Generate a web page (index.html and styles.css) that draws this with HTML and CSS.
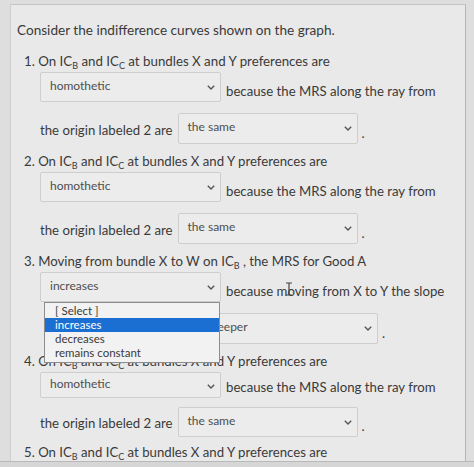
FILE: index.html
```html
<!DOCTYPE html>
<html>
<head>
<meta charset="utf-8">
<link rel="stylesheet" href="styles.css">
</head>
<body>
<div class="screen">
  <div class="panel">
    <p class="title">Consider the indifference curves shown on the graph.</p>

    <div class="item">
      <div class="head">1. On IC<sub>B</sub> and IC<sub>C</sub> at bundles X and Y preferences are</div>
      <div class="row first">
        <div class="sel wide"><span>homothetic</span><svg class="chev" viewBox="0 0 8 5"><path d="M0.8 0.8 L4 4 L7.2 0.8"/></svg></div>
        <span class="txt">because the MRS along the ray from</span>
      </div>
      <div class="row second">
        <span class="txt">the origin labeled 2 are</span>
        <div class="sel"><span>the same</span><svg class="chev" viewBox="0 0 8 5"><path d="M0.8 0.8 L4 4 L7.2 0.8"/></svg></div>
        <span class="dot">.</span>
      </div>
    </div>

    <div class="item">
      <div class="head">2. On IC<sub>B</sub> and IC<sub>C</sub> at bundles X and Y preferences are</div>
      <div class="row first">
        <div class="sel wide"><span>homothetic</span><svg class="chev" viewBox="0 0 8 5"><path d="M0.8 0.8 L4 4 L7.2 0.8"/></svg></div>
        <span class="txt">because the MRS along the ray from</span>
      </div>
      <div class="row second">
        <span class="txt">the origin labeled 2 are</span>
        <div class="sel"><span>the same</span><svg class="chev" viewBox="0 0 8 5"><path d="M0.8 0.8 L4 4 L7.2 0.8"/></svg></div>
        <span class="dot">.</span>
      </div>
    </div>

    <div class="item">
      <div class="head">3. Moving from bundle X to W on IC<sub>B</sub> , the MRS for Good A</div>
      <div class="row first open">
        <div class="sel wide"><span>increases</span><svg class="chev" viewBox="0 0 8 5"><path d="M0.8 0.8 L4 4 L7.2 0.8"/></svg></div>
        <span class="txt">because moving from X to Y the slope</span>
        <ul class="list">
          <li>[ Select ]</li>
          <li class="hl">increases</li>
          <li>decreases</li>
          <li>remains constant</li>
        </ul>
        <svg class="ibeam" viewBox="0 0 8 14"><path d="M1 1 H7 M4 1 V13 M1 13 H7"/></svg>
      </div>
      <div class="row second">
        <span class="txt hidden-lead">gets</span>
        <div class="sel"><span>steeper</span><svg class="chev" viewBox="0 0 8 5"><path d="M0.8 0.8 L4 4 L7.2 0.8"/></svg></div>
        <span class="dot">.</span>
      </div>
    </div>

    <div class="item compact">
      <div class="head">4. On IC<sub>B</sub> and IC<sub>C</sub> at bundles X and Y preferences are</div>
      <div class="row first">
        <div class="sel wide"><span>homothetic</span><svg class="chev" viewBox="0 0 8 5"><path d="M0.8 0.8 L4 4 L7.2 0.8"/></svg></div>
        <span class="txt">because the MRS along the ray from</span>
      </div>
      <div class="row second">
        <span class="txt">the origin labeled 2 are</span>
        <div class="sel"><span>the same</span><svg class="chev" viewBox="0 0 8 5"><path d="M0.8 0.8 L4 4 L7.2 0.8"/></svg></div>
        <span class="dot">.</span>
      </div>
    </div>

    <div class="item">
      <div class="head">5. On IC<sub>B</sub> and IC<sub>C</sub> at bundles X and Y preferences are</div>
    </div>
  </div>
</div>
</body>
</html>
```
FILE: styles.css
```css
html, body {
  margin: 0;
  padding: 0;
}
body {
  width: 474px;
  height: 467px;
  background: #d6d6d6;
  overflow: hidden;
  font-family: Lato, "Open Sans", sans-serif;
  color: #3a3a3a;
}
.screen {
  height: 462px;
  border-bottom: 1px solid #b9b9b9;
  background: #dedede;
  overflow: hidden;
  padding-top: 4px;
  box-sizing: border-box;
}
.panel {
  margin-left: 10px;
  width: 456px;
  height: 470px;
  box-sizing: border-box;
  border-left: 1px solid #cfcfcf;
  border-top: 1px solid #c4c4c4;
  border-right: 1px solid #b4b4b4;
  background: #e9e9e9;
  padding: 15px 0 0 6px;
}
.title {
  margin: 0;
  font-size: 13.6px;
  line-height: 20px;
  height: 20px;
}
.item {
  padding-left: 7px;
  padding-bottom: 7px;
}
.title + .item {
  margin-top: 11px;
}
.head {
  font-size: 13.3px;
  line-height: 20px;
  height: 20px;
  white-space: nowrap;
}
.item + .item .head {
  font-size: 13.2px;
}
sub {
  font-size: 9px;
  vertical-align: -3px;
  line-height: 0;
}
.row {
  display: flex;
  align-items: flex-end;
  padding-left: 16px;
  position: relative;
}
.row.first {
  margin-top: 1px;
}
.row.second {
  margin-top: 11px;
  align-items: center;
}
.txt {
  font-size: 13.2px;
  line-height: 20px;
  white-space: nowrap;
}
.row.first .txt {
  padding-bottom: 1px;
  margin-left: 5px;
}
.row.second .txt {
  margin-right: 5px;
  padding-top: 2px;
}
.hidden-lead {
  width: 143px;
  padding-left: 10px;
}
.sel {
  width: 180px;
  height: 31px;
  box-sizing: border-box;
  border: 1px solid #cecece;
  border-radius: 2px;
  background: #ececec;
  position: relative;
  font-size: 12px;
  color: #4e4e4e;
  padding: 5px 0 0 9px;
  line-height: 16px;
}
.sel.wide {
  width: 181px;
  height: 30px;
}
.compact {
  padding-bottom: 5px;
}
.compact .row.first .sel {
  height: 26px;
  padding-top: 3px;
}
.compact .row.first .chev {
  top: 11px;
}
.compact .row.second {
  margin-top: 9px;
}
.compact .row.second .sel {
  height: 30px;
}
.chev {
  position: absolute;
  right: 5px;
  top: 12px;
  width: 8px;
  height: 5px;
  fill: none;
  stroke: #555;
  stroke-width: 1.4;
}
.dot {
  font-size: 13.2px;
  margin-left: 4px;
  padding-top: 8px;
}
.list {
  position: absolute;
  left: 20px;
  top: 30px;
  width: 176px;
  margin: 0;
  padding: 1px 0 2px 0;
  list-style: none;
  background: #f2f2f2;
  border: 1px solid #8c8c8c;
  box-sizing: border-box;
  font-size: 11.5px;
  line-height: 14px;
  color: #3a3a3a;
  z-index: 2;
}
.list li {
  padding-left: 10px;
  height: 14px;
}
.list li.hl {
  background: #1b6fd3;
  color: #fff;
}
.ibeam {
  position: absolute;
  left: 261px;
  top: 10px;
  width: 8px;
  height: 14px;
  fill: none;
  stroke: #444;
  stroke-width: 1.2;
}
```
